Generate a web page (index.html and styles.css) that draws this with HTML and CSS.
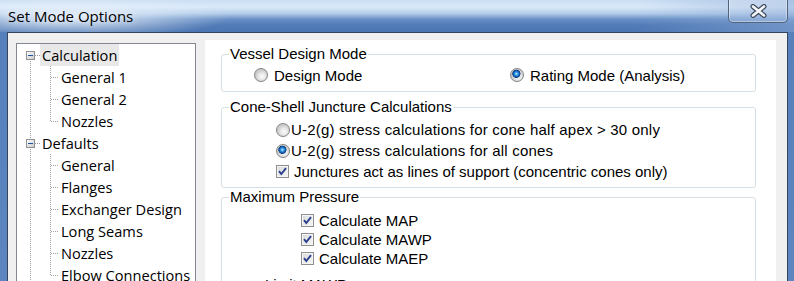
FILE: index.html
```html
<!DOCTYPE html>
<html>
<head>
    <title>Set Mode Options</title>
    <meta name="viewport" content="width=device-width, initial-scale=1.0">
    <link rel="stylesheet" href="styles.css">
</head>
<body>
    <div class="window">
        <div class="titlebar">
            <span class="title">Set Mode Options</span>
            <button class="close" type="button">
                <svg width="17" height="14" viewBox="0 0 17 14">
                    <path d="M3 2.5 L14 11.5 M14 2.5 L3 11.5" stroke="#3e4a5c" stroke-width="5" stroke-linecap="round" fill="none"/>
                    <path d="M3 2.5 L14 11.5 M14 2.5 L3 11.5" stroke="#f4f6f9" stroke-width="2.6" stroke-linecap="round" fill="none"/>
                </svg>
            </button>
        </div>

        <div class="frame">
            <div class="client">
                <div class="tree">
                    <ul class="tree-root">
                        <li>
                            <div class="node"><span class="expander"></span><span class="hdots"></span><span class="label selected">Calculation</span></div>
                            <ul class="children">
                                <li class="node"><span class="hdots"></span><span class="label">General 1</span></li>
                                <li class="node"><span class="hdots"></span><span class="label">General 2</span></li>
                                <li class="node"><span class="hdots"></span><span class="label">Nozzles</span></li>
                            </ul>
                        </li>
                        <li>
                            <div class="node"><span class="expander"></span><span class="hdots"></span><span class="label">Defaults</span></div>
                            <ul class="children">
                                <li class="node"><span class="hdots"></span><span class="label">General</span></li>
                                <li class="node"><span class="hdots"></span><span class="label">Flanges</span></li>
                                <li class="node"><span class="hdots"></span><span class="label">Exchanger Design</span></li>
                                <li class="node"><span class="hdots"></span><span class="label">Long Seams</span></li>
                                <li class="node"><span class="hdots"></span><span class="label">Nozzles</span></li>
                                <li class="node"><span class="hdots"></span><span class="label">Elbow Connections</span></li>
                            </ul>
                        </li>
                    </ul>
                </div>

                <div class="panel">
                    <fieldset class="group">
                        <legend>Vessel Design Mode</legend>
                        <div class="group-body mode-body">
                            <div class="option"><span class="radio"></span>Design Mode</div>
                            <div class="option"><span class="radio on"></span>Rating Mode (Analysis)</div>
                        </div>
                    </fieldset>

                    <fieldset class="group group-cone">
                        <legend>Cone-Shell Juncture Calculations</legend>
                        <div class="group-body cone-body">
                            <div class="option wide"><span class="radio"></span>U-2(g) stress calculations for cone half apex &gt; 30 only</div>
                            <div class="option wide"><span class="radio on"></span>U-2(g) stress calculations for all cones</div>
                            <div class="option"><span class="check"><svg width="11" height="11" viewBox="0 0 11 11"><path d="M2 5.2 L4.3 8 L9 2.2" stroke="#2a3e8c" stroke-width="1.9" fill="none"/></svg></span>Junctures act as lines of support (concentric cones only)</div>
                        </div>
                    </fieldset>

                    <fieldset class="group">
                        <legend>Maximum Pressure</legend>
                        <div class="group-body pressure-body">
                            <div class="option"><span class="check"><svg width="11" height="11" viewBox="0 0 11 11"><path d="M2 5.2 L4.3 8 L9 2.2" stroke="#2a3e8c" stroke-width="1.9" fill="none"/></svg></span>Calculate MAP</div>
                            <div class="option"><span class="check"><svg width="11" height="11" viewBox="0 0 11 11"><path d="M2 5.2 L4.3 8 L9 2.2" stroke="#2a3e8c" stroke-width="1.9" fill="none"/></svg></span>Calculate MAWP</div>
                            <div class="option"><span class="check"><svg width="11" height="11" viewBox="0 0 11 11"><path d="M2 5.2 L4.3 8 L9 2.2" stroke="#2a3e8c" stroke-width="1.9" fill="none"/></svg></span>Calculate MAEP</div>
                            <div class="limit">Limit MAWP</div>
                        </div>
                    </fieldset>
                </div>
            </div>
        </div>
    </div>
</body>
</html>
```

FILE: styles.css
```css
body {
    margin: 0;
    width: 794px;
    height: 281px;
    overflow: hidden;
    font-family: "Liberation Sans", Arial, sans-serif;
    font-size: 15px;
    color: #000;
}
.window {
    display: flex;
    flex-direction: column;
    height: 281px;
    background: #5d85bf;
}

/* title bar (aero glass) */
.titlebar {
    height: 32px;
    flex-shrink: 0;
    display: flex;
    align-items: flex-start;
    background:
        radial-gradient(ellipse 160px 22px at 70px 17px, rgba(232, 241, 251, 0.95), rgba(232, 241, 251, 0)),
        linear-gradient(to right, rgba(140, 170, 215, 0) 80%, rgba(140, 170, 215, 0.55) 100%),
        linear-gradient(to bottom, #cbdef4 0%, #dbeaf9 22%, #b4cdea 42%, #6990c6 60%, #527bb6 78%, #4b76b3 100%);
}
.title {
    padding-left: 8px;
    line-height: 32px;
    font-family: "Open Sans", sans-serif;
    font-size: 15px;
    color: #000;
    text-shadow: 0 0 8px rgba(255, 255, 255, 0.9);
}
.close {
    margin: -1px 6px 0 auto;
    width: 60px;
    height: 24px;
    padding: 0;
    border: 1px solid #52637d;
    border-top: none;
    border-radius: 0 0 5px 5px;
    background: linear-gradient(to bottom, rgba(255, 255, 255, 0.25), rgba(255, 255, 255, 0.12) 55%, rgba(200, 220, 245, 0.3));
    box-shadow: inset 0 0 0 1px rgba(255, 255, 255, 0.35);
    display: flex;
    align-items: center;
    justify-content: center;
}

/* window body */
.frame {
    flex: 1;
    min-height: 0;
    display: flex;
    padding: 0 6px 0 7px;
    background: linear-gradient(to bottom, #5580bb, #5d86c0);
}
.client {
    flex: 1;
    display: flex;
    align-items: flex-start;
    padding: 7px 11px 0 8px;
    border: 1px solid #34455d;
    border-bottom: none;
    background: #f0f0f0;
    overflow: hidden;
}

/* tree view */
.tree {
    width: 178px;
    height: 300px;
    flex-shrink: 0;
    margin-top: 3px;
    border: 1px solid #828790;
    background: #fff;
    font-family: "Open Sans", sans-serif;
    font-size: 14.6px;
}
.tree ul {
    list-style: none;
    margin: 0;
    padding: 0;
}
.tree-root {
    background-image: repeating-linear-gradient(to bottom, #a0a0a0 0 1px, transparent 1px 2px);
    background-size: 1px 100%;
    background-position: 13px 17px;
    background-repeat: no-repeat;
}
.node {
    display: flex;
    align-items: center;
    height: 22px;
}
.tree-root > li > .node {
    padding-left: 9px;
}
.expander {
    width: 9px;
    height: 9px;
    box-sizing: border-box;
    border: 1px solid #919191;
    background:
        linear-gradient(#2450a0, #2450a0) center / 5px 1px no-repeat,
        linear-gradient(135deg, #ffffff, #c8c8c8);
}
.hdots {
    width: 5px;
    height: 1px;
    background: repeating-linear-gradient(to right, #a0a0a0 0 1px, transparent 1px 2px);
}
.label {
    padding: 0 2px;
    line-height: 22px;
    white-space: nowrap;
}
.label.selected {
    background: #e8e8e8;
}
.children {
    background-image: repeating-linear-gradient(to bottom, #a0a0a0 0 1px, transparent 1px 2px);
    background-size: 1px calc(100% - 11px);
    background-position: 33px 0;
    background-repeat: no-repeat;
}
.children .node {
    padding-left: 34px;
}
.children .hdots {
    width: 7px;
}
.children .label {
    padding-left: 3px;
}

/* options panel */
.panel {
    flex: 1;
    height: 260px;
    margin-left: 9px;
    padding: 5px 20px 0 16px;
    background: #fff;
}
.group {
    margin: 0;
    padding: 0;
    min-inline-size: 0;
    border: 1px solid #d5dfe5;
    border-radius: 3px;
}
.group legend {
    margin-left: 7px;
    padding: 0 1px;
    line-height: 18px;
}
.group-cone {
    margin: 6px 0 0;
}
.mode-body {
    display: grid;
    grid-template-columns: 256px auto;
    padding: 2px 0 6px 32px;
}
.cone-body {
    padding: 3px 0 5px 54px;
}
.cone-body .option {
    height: 21px;
}
.cone-body .wide {
    letter-spacing: 0.2px;
}
.pressure-body {
    padding: 5px 0 0 79px;
}
.pressure-body .option {
    height: 19px;
}
.option {
    display: flex;
    align-items: center;
    height: 20px;
    white-space: nowrap;
}
.radio {
    width: 14px;
    height: 14px;
    flex-shrink: 0;
    box-sizing: border-box;
    margin-right: 6px;
    border: 1px solid #868788;
    border-radius: 50%;
    background: radial-gradient(circle at 58% 62%, #fbfbfb 0, #eaeaea 3px, #c9c9c9 6.5px);
    box-shadow: 0 0 1px rgba(0, 0, 0, 0.15);
}
.radio.on {
    background:
        radial-gradient(circle at 45% 40%, #c8f0ff 0, #3a9ee6 1.5px, #105fb6 3px, #143e7c 3.8px, rgba(20, 62, 124, 0) 4.4px),
        radial-gradient(circle at 58% 62%, #fbfbfb 0, #eaeaea 3px, #c9c9c9 6.5px);
}
.cone-body .radio {
    margin-right: 1px;
}
.check {
    width: 13px;
    height: 13px;
    flex-shrink: 0;
    box-sizing: border-box;
    margin-right: 5px;
    border: 1px solid #8e8f8f;
    background: linear-gradient(135deg, #d8d9da, #f7f7f7);
    box-shadow: inset 0 0 0 1px #f5f5f5;
    display: flex;
    align-items: center;
    justify-content: center;
}
.limit {
    margin: 7px 0 0 -36px;
    line-height: 20px;
}
```
